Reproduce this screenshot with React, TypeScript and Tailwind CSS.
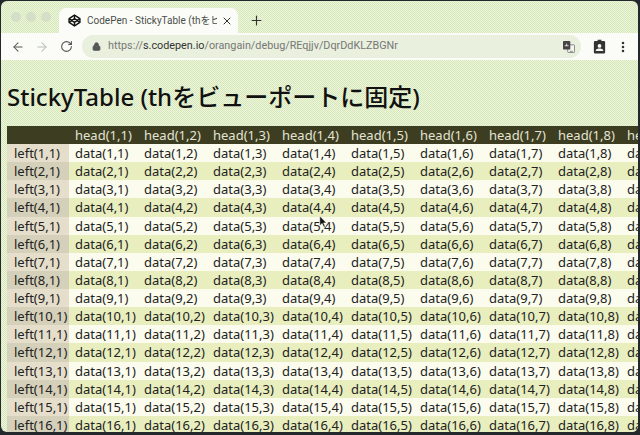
import { ArrowLeft, ArrowRight, EllipsisVertical, Lock, Plus, RotateCw, X } from "lucide-react";

const rows = Array.from({ length: 16 }, (_, i) => i + 1);
const cols = Array.from({ length: 9 }, (_, i) => i + 1);

function CodepenLogo() {
  return (
    <svg viewBox="0 0 24 24" className="size-[13px]" fill="none" stroke="#111" strokeWidth="2.6" strokeLinejoin="round">
      <path d="M12 2 22 8.5v7L12 22 2 15.5v-7Z" />
      <path d="M12 2v6.5M12 15.5V22M2 8.5l10 7 10-7M2 15.5l10-7 10 7" />
    </svg>
  );
}

function TranslateIcon() {
  return (
    <svg viewBox="0 0 14 14" className="size-[12px]">
      <rect x="5.500" y="4.500" width="8" height="9" rx="1" fill="#f4f6ee" stroke="#777" />
      <rect x="0" y="0" width="8.500" height="10" rx="1" fill="#444" />
      <path d="M2 5.500h4.500M4.200 3v2.500" stroke="#eee" strokeWidth="1" />
      <path d="M8 12h3.500" stroke="#777" />
    </svg>
  );
}

export default function App() {
  return (
    <div className="relative h-[435px] w-[640px] overflow-hidden bg-[#23282c] pb-[3px] pl-px pr-[2px] pt-px font-['Noto_Sans','Noto_Sans_CJK_JP',sans-serif]">
      <div className="h-full overflow-hidden rounded-[6px] bg-[image:repeating-conic-gradient(#eef5df_0_25%,#d6e7b8_0_50%)] bg-[length:2px_2px]">
        {/* browser chrome */}
        <div className="flex h-[32px] items-end">
          <div className="flex items-center gap-[5px] self-center pl-[10px] pr-[8px]">
            <span className="size-[10px] rounded-full bg-[#d5dfc8]" />
            <span className="size-[10px] rounded-full bg-[#d5dfc8]" />
            <span className="size-[10px] rounded-full bg-[#d5dfc8]" />
          </div>
          <div className="flex h-[25px] w-[179px] items-center rounded-t-[7px] bg-[#fbfcf7] pl-[9px] pr-[5px]">
            <CodepenLogo />
            <span className="ml-[6px] w-[130px] overflow-hidden whitespace-nowrap font-['Roboto','Noto_Sans_CJK_JP',sans-serif] text-[10px] text-[#4a4f4a]">
              CodePen - StickyTable (thをビュ
            </span>
            <X className="ml-auto size-[12px] text-[#333]" strokeWidth={2} />
          </div>
          <Plus className="mb-[5px] ml-[11px] size-[15px] text-[#333]" strokeWidth={1.8} />
        </div>
        <div className="flex h-[27px] items-center bg-[#fbfcf7] pl-[10px] pr-[8px]">
          <ArrowLeft className="size-[14px] text-[#555]" strokeWidth={1.8} />
          <ArrowRight className="ml-[10px] size-[14px] text-[#b8bdb8]" strokeWidth={1.8} />
          <RotateCw className="ml-[11px] size-[13px] text-[#555]" strokeWidth={2} />
          <div className="ml-[9px] flex h-[23px] min-w-0 flex-1 items-center rounded-full bg-[#e9f0dd] pl-[10px] pr-[6px]">
            <Lock className="size-[9px] fill-[#555] text-[#555]" strokeWidth={2.5} />
            <span className="ml-[7px] whitespace-nowrap font-['Roboto',sans-serif] text-[10.8px] text-[#777]">
              https://<span className="text-[#333]">s.codepen.io</span>/orangain/debug/REqjjv/DqrDdKLZBGNr
            </span>
            <span className="ml-auto">
              <TranslateIcon />
            </span>
          </div>
          <svg viewBox="0 0 24 24" className="ml-[11px] size-[15px]" fill="#333">
            <path d="M5 3h4V1h6v2h4a2 2 0 0 1 2 2v16a2 2 0 0 1-2 2H5a2 2 0 0 1-2-2V5a2 2 0 0 1 2-2Zm7 5a3 3 0 1 0 0 6 3 3 0 0 0 0-6Zm-6 11h12v-1c0-2-4-3-6-3s-6 1-6 3Z" fillRule="evenodd" />
          </svg>
          <EllipsisVertical className="ml-[9px] size-[14px] text-[#333]" strokeWidth={2.4} />
        </div>

        {/* page */}
        <div className="pl-[6px] pt-[20px]">
          <h1 className="mb-[12px] h-[34px] whitespace-nowrap text-[24px] font-medium leading-[34px] text-[#111]">
            StickyTable (thをビューポートに固定)
          </h1>
          <table className="w-max table-fixed border-collapse text-[13px] leading-[18px] text-[#222]">
            <thead>
              <tr className="h-[18px] bg-[#3d3d22] text-[#e4e4d4]">
                <th className="w-[62px] p-0" />
                {cols.map((c) => (
                  <th key={c} className="w-[69px] p-0 pl-[6px] text-left font-normal">
                    head(1,{c})
                  </th>
                ))}
              </tr>
            </thead>
            <tbody>
              {rows.map((r) => (
                <tr key={r} className={r % 2 === 1 ? "h-[18.13px] bg-[#fbfcee]" : "h-[18.13px] bg-[#e9eebf]"}>
                  <th className={r % 2 === 1 ? "bg-[#e5decb] p-0 pl-[7px] text-left font-normal" : "bg-[#d5d0b9] p-0 pl-[7px] text-left font-normal"}>
                    left({r},1)
                  </th>
                  {cols.map((c) => (
                    <td key={c} className="whitespace-nowrap p-0 pl-[6px]">
                      data({r},{c})
                    </td>
                  ))}
                </tr>
              ))}
            </tbody>
          </table>
        </div>
      </div>
      {/* mouse pointer */}
      <svg viewBox="0 0 12 18" className="absolute left-[319px] top-[215px] h-[14px] w-[9px]">
        <path d="M1 1v13l3.2-3 2.2 5 2-1-2.2-4.800H10Z" fill="#111" stroke="#fff" strokeWidth="0.8" />
      </svg>
    </div>
  );
}
